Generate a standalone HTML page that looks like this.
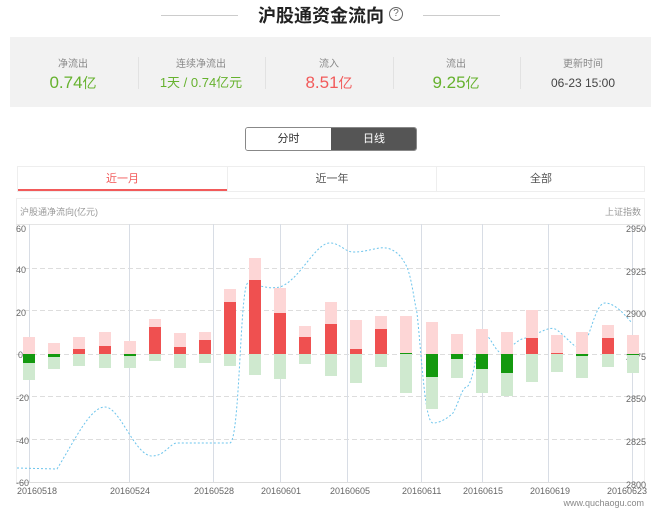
<!DOCTYPE html>
<html><head><meta charset="utf-8"><style>
*{margin:0;padding:0;box-sizing:border-box}
body{width:660px;height:511px;background:#fff;font-family:"Liberation Sans","Noto Sans CJK SC",sans-serif;position:relative;overflow:hidden;color:#333}
.a{position:absolute}
.ttl{left:258px;top:2px;font-size:18px;font-weight:bold;color:#222;white-space:nowrap;letter-spacing:0}
.q{left:389px;top:7px;width:14px;height:14px;border:1.3px solid #666;border-radius:50%;font-size:10px;line-height:12px;text-align:center;color:#666}
.ln{height:1px;background:#ccc;top:15px}
.box{left:10px;top:37px;width:641px;height:70px;background:#f2f2f2}
.col{top:37px;width:128px;text-align:center}
.col .l{font-size:10px;color:#888;margin-top:22px;line-height:12px}
.col .v{font-size:17px;line-height:22px;margin-top:1px}
.col .v small{font-size:14px}
.dv{top:57px;width:1px;height:32px;background:#e2e2e2}
.g{color:#66b22e}.r{color:#f25a5a}
.tg{left:245px;top:127px;width:172px;height:24px;border:1px solid #888;border-radius:3px;overflow:hidden;font-size:11px}
.tg div{position:absolute;top:0;height:22px;line-height:22px;text-align:center;width:85px}
.tabs{left:17px;top:166px;width:628px;height:26px;border:1px solid #eee;font-size:11px}
.tabs div{position:absolute;top:0;height:24px;line-height:24px;text-align:center;color:#555}
</style></head><body>
<div class="a ln" style="left:161px;width:77px"></div>
<div class="a ln" style="left:423px;width:77px"></div>
<div class="a ttl">沪股通资金流向</div>
<div class="a q">?</div>
<div class="a box"></div>
<div class="a col" style="left:9px"><div class="l">净流出</div><div class="v g">0.74<small>亿</small></div></div>
<div class="a col" style="left:137px"><div class="l">连续净流出</div><div class="v g" style="font-size:13px">1天 / 0.74亿元</div></div>
<div class="a col" style="left:265px"><div class="l">流入</div><div class="v r">8.51<small>亿</small></div></div>
<div class="a col" style="left:392px"><div class="l">流出</div><div class="v g">9.25<small>亿</small></div></div>
<div class="a col" style="left:519px"><div class="l">更新时间</div><div class="v" style="font-size:12px;color:#444">06-23 15:00</div></div>
<div class="a dv" style="left:138px"></div><div class="a dv" style="left:265px"></div><div class="a dv" style="left:393px"></div><div class="a dv" style="left:520px"></div>
<div class="a tg"><div style="left:0;background:#fff;color:#333">分时</div><div style="left:85px;width:86px;background:#555;color:#fff">日线</div></div>
<div class="a tabs">
<div style="left:0;width:209px;color:#f25a5a;border-bottom:2px solid #f25a5a">近一月</div>
<div style="left:209px;width:209px;border-left:1px solid #eee">近一年</div>
<div style="left:418px;width:209px;border-left:1px solid #eee">全部</div>
</div>
<svg class="a" style="left:0;top:0" width="660" height="511" font-family="Liberation Sans, Noto Sans CJK SC, sans-serif">
<rect x="16.5" y="198.5" width="628" height="284" fill="none" stroke="#eee"/>
<text x="20" y="215" font-size="9" fill="#999">沪股通净流向(亿元)</text>
<text x="641" y="215" font-size="9" fill="#999" text-anchor="end">上证指数</text>
<line x1="16" y1="224.5" x2="645" y2="224.5" stroke="#e5e5e5"/>
<g stroke="#ddd" stroke-dasharray="5,3">
<line x1="16" y1="268.5" x2="640" y2="268.5"/><line x1="16" y1="310.5" x2="640" y2="310.5"/>
<line x1="16" y1="354.5" x2="640" y2="354.5"/><line x1="16" y1="396.5" x2="640" y2="396.5"/>
<line x1="16" y1="439.5" x2="640" y2="439.5"/></g>
<g stroke="#d8dde5"><line x1="29.5" y1="224" x2="29.5" y2="482"/><line x1="129.5" y1="224" x2="129.5" y2="482"/><line x1="213.5" y1="224" x2="213.5" y2="482"/><line x1="280.5" y1="224" x2="280.5" y2="482"/><line x1="347.5" y1="224" x2="347.5" y2="482"/><line x1="421.5" y1="224" x2="421.5" y2="482"/><line x1="482.5" y1="224" x2="482.5" y2="482"/><line x1="548.5" y1="224" x2="548.5" y2="482"/><line x1="632.5" y1="224" x2="632.5" y2="482"/></g>
<line x1="16" y1="482.5" x2="645" y2="482.5" stroke="#ddd"/>
<g id="bars"></g>
<path d="M17 468 L57 469 C75 440 90 407 105 407 C120 407 135 456 152 456 C165 456 170 443 177 443 L230 443 C240 440 240 283 248 283 C255 283 265 290 280 287 C300 280 315 243 330 243 C340 243 345 252 353 252 C370 252 380 245 390 249 C400 253 403 260 407 267 C412 280 414 300 417 313 C422 360 425 423 433 423 C440 423 448 418 453 413 C460 400 462 387 467 387 C475 380 478 333 482 333 C490 333 495 353 502 353 C510 350 517 338 527 338 C540 333 550 325 557 330 C570 340 575 350 582 347 C590 340 595 303 605 303 C615 303 625 315 632 323" fill="none" stroke="#6cc4ec" stroke-width="1" stroke-dasharray="2,2"/>
<g font-size="9" fill="#666">
<text x="16" y="232">60</text><text x="16" y="273">40</text><text x="16" y="316">20</text><text x="18" y="358">0</text><text x="16" y="401">-20</text><text x="16" y="444">-40</text><text x="16" y="486">-60</text>
<text x="626" y="232">2950</text><text x="626" y="275">2925</text><text x="626" y="317">2900</text><text x="626" y="360">2875</text><text x="626" y="402">2850</text><text x="626" y="445">2825</text><text x="626" y="488">2800</text>
<text x="17" y="494">20160518</text><text x="110" y="494">20160524</text><text x="194" y="494">20160528</text><text x="261" y="494">20160601</text><text x="330" y="494">20160605</text><text x="402" y="494">20160611</text><text x="463" y="494">20160615</text><text x="530" y="494">20160619</text><text x="607" y="494">20160623</text>
<text x="644" y="506" text-anchor="end" fill="#888">www.quchaogu.com</text>
</g>
<g>
<!-- x, lightRedTop, net (negative y below), lightGreenBottom -->
<rect x="23" y="337" width="12" height="17" fill="#fdd6d6"/><rect x="23" y="354" width="12" height="26" fill="#cfe9cf"/><rect x="23" y="354" width="12" height="9" fill="#14990f"/>
<rect x="48" y="343" width="12" height="11" fill="#fdd6d6"/><rect x="48" y="354" width="12" height="15" fill="#cfe9cf"/><rect x="48" y="354" width="12" height="3" fill="#14990f"/>
<rect x="73" y="337" width="12" height="17" fill="#fdd6d6"/><rect x="73" y="349" width="12" height="5" fill="#ef5050"/><rect x="73" y="354" width="12" height="12" fill="#cfe9cf"/>
<rect x="99" y="332" width="12" height="22" fill="#fdd6d6"/><rect x="99" y="346" width="12" height="8" fill="#ef5050"/><rect x="99" y="354" width="12" height="14" fill="#cfe9cf"/>
<rect x="124" y="341" width="12" height="13" fill="#fdd6d6"/><rect x="124" y="354" width="12" height="14" fill="#cfe9cf"/><rect x="124" y="354" width="12" height="2" fill="#14990f"/>
<rect x="149" y="319" width="12" height="35" fill="#fdd6d6"/><rect x="149" y="327" width="12" height="27" fill="#ef5050"/><rect x="149" y="354" width="12" height="7" fill="#cfe9cf"/>
<rect x="174" y="333" width="12" height="21" fill="#fdd6d6"/><rect x="174" y="347" width="12" height="7" fill="#ef5050"/><rect x="174" y="354" width="12" height="14" fill="#cfe9cf"/>
<rect x="199" y="332" width="12" height="22" fill="#fdd6d6"/><rect x="199" y="340" width="12" height="14" fill="#ef5050"/><rect x="199" y="354" width="12" height="9" fill="#cfe9cf"/>
<rect x="224" y="289" width="12" height="65" fill="#fdd6d6"/><rect x="224" y="302" width="12" height="52" fill="#ef5050"/><rect x="224" y="354" width="12" height="12" fill="#cfe9cf"/>
<rect x="249" y="258" width="12" height="96" fill="#fdd6d6"/><rect x="249" y="280" width="12" height="74" fill="#ef5050"/><rect x="249" y="354" width="12" height="21" fill="#cfe9cf"/>
<rect x="274" y="288" width="12" height="66" fill="#fdd6d6"/><rect x="274" y="313" width="12" height="41" fill="#ef5050"/><rect x="274" y="354" width="12" height="25" fill="#cfe9cf"/>
<rect x="299" y="326" width="12" height="28" fill="#fdd6d6"/><rect x="299" y="337" width="12" height="17" fill="#ef5050"/><rect x="299" y="354" width="12" height="10" fill="#cfe9cf"/>
<rect x="325" y="302" width="12" height="52" fill="#fdd6d6"/><rect x="325" y="324" width="12" height="30" fill="#ef5050"/><rect x="325" y="354" width="12" height="22" fill="#cfe9cf"/>
<rect x="350" y="320" width="12" height="34" fill="#fdd6d6"/><rect x="350" y="349" width="12" height="5" fill="#ef5050"/><rect x="350" y="354" width="12" height="29" fill="#cfe9cf"/>
<rect x="375" y="316" width="12" height="38" fill="#fdd6d6"/><rect x="375" y="329" width="12" height="25" fill="#ef5050"/><rect x="375" y="354" width="12" height="13" fill="#cfe9cf"/>
<rect x="400" y="316" width="12" height="38" fill="#fdd6d6"/><rect x="400" y="354" width="12" height="39" fill="#cfe9cf"/><rect x="400" y="353" width="12" height="1" fill="#14990f"/>
<rect x="426" y="322" width="12" height="32" fill="#fdd6d6"/><rect x="426" y="354" width="12" height="55" fill="#cfe9cf"/><rect x="426" y="354" width="12" height="23" fill="#14990f"/>
<rect x="451" y="334" width="12" height="20" fill="#fdd6d6"/><rect x="451" y="354" width="12" height="24" fill="#cfe9cf"/><rect x="451" y="354" width="12" height="5" fill="#14990f"/>
<rect x="476" y="329" width="12" height="25" fill="#fdd6d6"/><rect x="476" y="354" width="12" height="39" fill="#cfe9cf"/><rect x="476" y="354" width="12" height="15" fill="#14990f"/>
<rect x="501" y="332" width="12" height="22" fill="#fdd6d6"/><rect x="501" y="354" width="12" height="42" fill="#cfe9cf"/><rect x="501" y="354" width="12" height="19" fill="#14990f"/>
<rect x="526" y="310" width="12" height="44" fill="#fdd6d6"/><rect x="526" y="338" width="12" height="16" fill="#ef5050"/><rect x="526" y="354" width="12" height="28" fill="#cfe9cf"/>
<rect x="551" y="335" width="12" height="19" fill="#fdd6d6"/><rect x="551" y="353" width="12" height="1" fill="#ef5050"/><rect x="551" y="354" width="12" height="18" fill="#cfe9cf"/>
<rect x="576" y="332" width="12" height="22" fill="#fdd6d6"/><rect x="576" y="354" width="12" height="24" fill="#cfe9cf"/><rect x="576" y="354" width="12" height="2" fill="#14990f"/>
<rect x="602" y="325" width="12" height="29" fill="#fdd6d6"/><rect x="602" y="338" width="12" height="16" fill="#ef5050"/><rect x="602" y="354" width="12" height="13" fill="#cfe9cf"/>
<rect x="627" y="335" width="12" height="19" fill="#fdd6d6"/><rect x="627" y="354" width="12" height="19" fill="#cfe9cf"/><rect x="627" y="354" width="12" height="1" fill="#14990f"/>
</g>
</svg>
</body></html>
